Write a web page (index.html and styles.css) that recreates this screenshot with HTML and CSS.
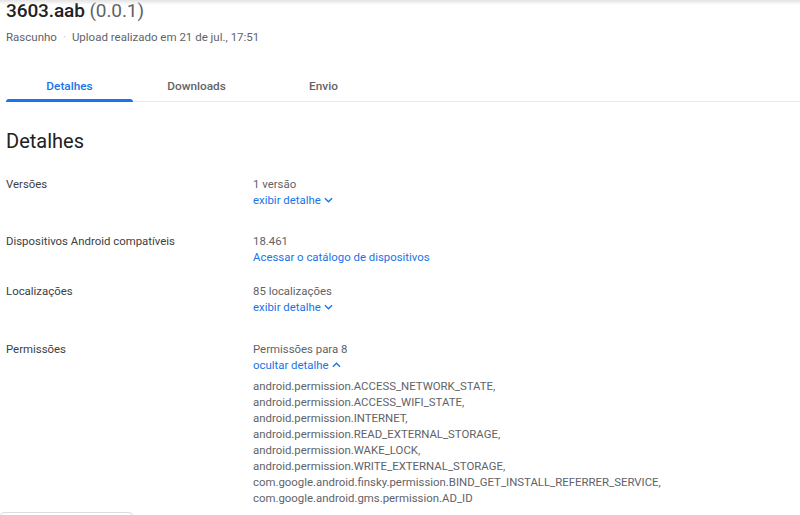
FILE: index.html
```html
<!DOCTYPE html>
<html lang="pt">
<head>
<meta charset="utf-8">
<link rel="stylesheet" href="styles.css">
</head>
<body>
<div class="topshadow"></div>
<div class="page">
  <header class="head">
    <h1 class="title">3603.aab <span class="ver">(0.0.1)</span></h1>
    <div class="sub"><span>Rascunho</span><span class="dot">·</span><span>Upload realizado em 21 de jul., 17:51</span></div>
  </header>
  <nav class="tabs">
    <div class="tab active">Detalhes</div>
    <div class="tab">Downloads</div>
    <div class="tab">Envio</div>
  </nav>
  <h2 class="section">Detalhes</h2>
  <div class="rows">
    <div class="row r1">
      <div class="label">Versões</div>
      <div class="value"><div>1 versão</div><a class="link">exibir detalhe <svg viewBox="0 0 10 6" class="chev"><path d="M1 1l4 4 4-4"/></svg></a></div>
    </div>
    <div class="row r2">
      <div class="label">Dispositivos Android compatíveis</div>
      <div class="value"><div>18.461</div><a class="link">Acessar o catálogo de dispositivos</a></div>
    </div>
    <div class="row r3">
      <div class="label">Localizações</div>
      <div class="value"><div>85 localizações</div><a class="link">exibir detalhe <svg viewBox="0 0 10 6" class="chev"><path d="M1 1l4 4 4-4"/></svg></a></div>
    </div>
    <div class="row r4">
      <div class="label">Permissões</div>
      <div class="value"><div>Permissões para 8</div><a class="link">ocultar detalhe <svg viewBox="0 0 10 6" class="chev"><path d="M1 5l4-4 4 4"/></svg></a>
        <ul class="perms">
          <li>android.permission.ACCESS_NETWORK_STATE,</li>
          <li>android.permission.ACCESS_WIFI_STATE,</li>
          <li>android.permission.INTERNET,</li>
          <li>android.permission.READ_EXTERNAL_STORAGE,</li>
          <li>android.permission.WAKE_LOCK,</li>
          <li>android.permission.WRITE_EXTERNAL_STORAGE,</li>
          <li>com.google.android.finsky.permission.BIND_GET_INSTALL_REFERRER_SERVICE,</li>
          <li>com.google.android.gms.permission.AD_ID</li>
        </ul>
      </div>
    </div>
  </div>
  <div class="boxedge"></div>
</div>
</body>
</html>
```
FILE: styles.css
```css
* { box-sizing: border-box; }
html, body { margin: 0; padding: 0; background: #fff; }
body { font-family: Roboto, "Noto Sans", sans-serif; color: #202124; overflow: hidden; height: 515px; position: relative; }
.topshadow { position: absolute; left: 0; right: 0; top: 0; height: 5px; background: linear-gradient(#e3e3e3, rgba(255,255,255,0)); }
.page { padding-left: 6px; }
.head { height: 66px; }
.title { margin: 0; font-size: 19px; font-weight: 500; line-height: 22px; color: #202124; letter-spacing: -0.1px; }
.ver { font-weight: 400; color: #5f6368; }
.sub { margin-top: 8px; font-size: 11.5px; color: #5f6368; display: flex; gap: 6px; line-height: 14px; }
.dot { color: #bdc1c6; }
.tabs { display: flex; border-bottom: 1px solid #e8eaed; height: 36px; }
.tab { width: 127px; text-align: center; font-size: 11.8px; font-weight: 500; color: #5f6368; line-height: 14px; padding-top: 13px; position: relative; }
.tab.active { color: #1a73e8; }
.tab.active::after { content: ""; position: absolute; left: 0; right: 0; bottom: -1px; height: 3px; background: #1a73e8; border-radius: 3px 3px 0 0; }
.section { margin: 27px 0 0; font-size: 20px; font-weight: 400; line-height: 24px; color: #202124; }
.rows { margin-top: 23px; font-size: 11.4px; line-height: 16px; color: #5f6368; }
.row { display: flex; }
.label { width: 247px; color: #3c4043; }
.value { flex: 1; }
.link { color: #1a73e8; display: inline-flex; align-items: center; gap: 3px; }
.chev { width: 9px; height: 6px; fill: none; stroke: #1a73e8; stroke-width: 1.5; }
.r1 { height: 57px; }
.r2 { height: 50px; }
.r3 { height: 58px; }
.perms { list-style: none; margin: 5px 0 0; padding: 0; line-height: 16px; color: #5f6368; }
.boxedge { position: absolute; left: 0; top: 512px; width: 133px; height: 20px; border: 1px solid #dadce0; border-radius: 4px; }
```
